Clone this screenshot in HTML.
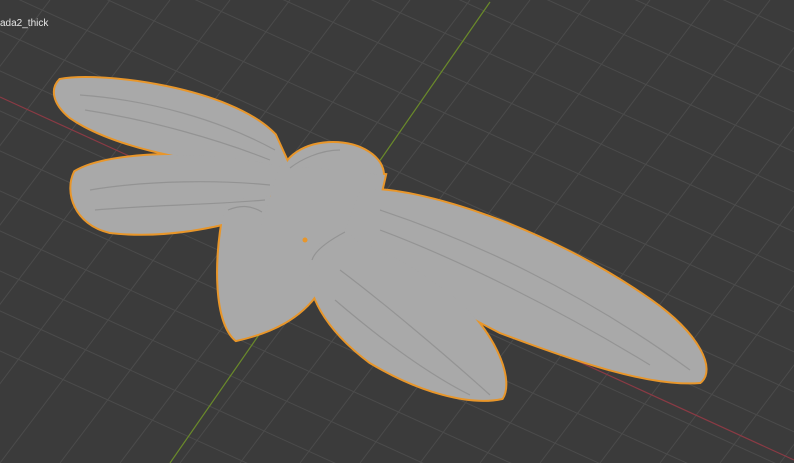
<!DOCTYPE html>
<html><head><style>
html,body{margin:0;padding:0;background:#3a3a3a;overflow:hidden;width:794px;height:463px}
svg{display:block;position:absolute;left:0;top:0}
</style></head><body>
<svg width="794" height="463" viewBox="0 0 794 463" xmlns="http://www.w3.org/2000/svg">
<defs>
<g id="sh">
<path d="M60,80 C100,72 230,88 275,135 L290,168 C230,168 120,152 70,117 C52,102 52,88 60,80Z"/>
<path d="M75,172 C110,150 220,150 285,168 L262,212 C220,228 160,238 110,232 C75,224 65,192 75,172Z"/>
<path d="M225,208 C245,188 300,192 322,228 L318,292 C300,318 272,332 236,340 C215,322 214,262 225,208Z"/>
<ellipse cx="333" cy="175" rx="50" ry="32"/>
<path d="M280,165 L385,175 L370,240 L320,270 L260,230Z"/>
<path d="M360,190 C420,186 550,230 650,300 C700,335 715,370 700,382 C650,386 580,362 500,332 C440,302 380,262 345,230Z"/>
<path d="M312,250 C340,218 410,262 460,302 C500,342 512,382 502,398 C470,405 420,392 370,362 C330,332 300,292 312,250Z"/>
</g>
</defs>
<rect width="794" height="463" fill="#3b3b3b"/>
<g stroke="#4b4b4b" stroke-width="1">
<path d="M-200,-60 L900,440 M-200,-20 L900,480 M-200,-100 L900,400 M-200,-140 L900,360 M-200,-180 L900,320 M-200,-220 L900,280 M-200,-260 L900,240 M-200,-300 L900,200 M-200,-340 L900,160 M-200,-380 L900,120 M-200,-420 L900,80 M-200,-460 L900,40 M-200,-500 L900,0 M-200,20 L900,520 M-200,60 L900,560 M-200,100 L900,600 M-200,140 L900,640 M-200,180 L900,680 M-200,220 L900,720 M-200,260 L900,760"/>
<path d="M110,0 L-240,463 M170,0 L-180,463 M230,0 L-120,463 M290,0 L-60,463 M350,0 L0,463 M410,0 L60,463 M470,0 L120,463 M530,0 L180,463 M590,0 L240,463 M650,0 L300,463 M710,0 L360,463 M770,0 L420,463 M830,0 L480,463 M890,0 L540,463 M950,0 L600,463 M1010,0 L660,463 M1070,0 L720,463 M1130,0 L780,463 M1190,0 L840,463 M50,0 L-300,463"/>
</g>
<path d="M0,97 L794,460" stroke="#8a3a44" stroke-width="1.2"/>
<path d="M490,2 L170,463" stroke="#6a8a2a" stroke-width="1.2"/>
<use href="#sh" fill="#e8962a" stroke="#e8962a" stroke-width="4"/>
<use href="#sh" fill="#a9a9a9"/>
<g stroke="#8e8e8e" stroke-width="1.2" fill="none" opacity="0.8">
<path d="M80,95 C150,100 220,120 275,150 M85,110 C150,120 220,140 270,160 M90,190 C150,180 220,180 270,185 M95,210 C150,205 210,205 265,200"/>
<path d="M380,210 C470,240 580,290 690,370 M380,230 C460,260 560,310 650,365 M340,270 C380,300 440,350 490,395 M335,300 C370,330 420,370 470,395"/>
<path d="M345,232 C330,240 315,250 312,260 M262,212 C250,205 240,205 228,210 M290,168 C300,160 320,150 340,150"/>
</g>
<circle cx="305" cy="240" r="2.5" fill="#e8962a"/>
<text x="0" y="26" fill="#e6e6e6" font-family="Liberation Sans, sans-serif" font-size="10">ada2_thick</text>
</svg>
</body></html>
